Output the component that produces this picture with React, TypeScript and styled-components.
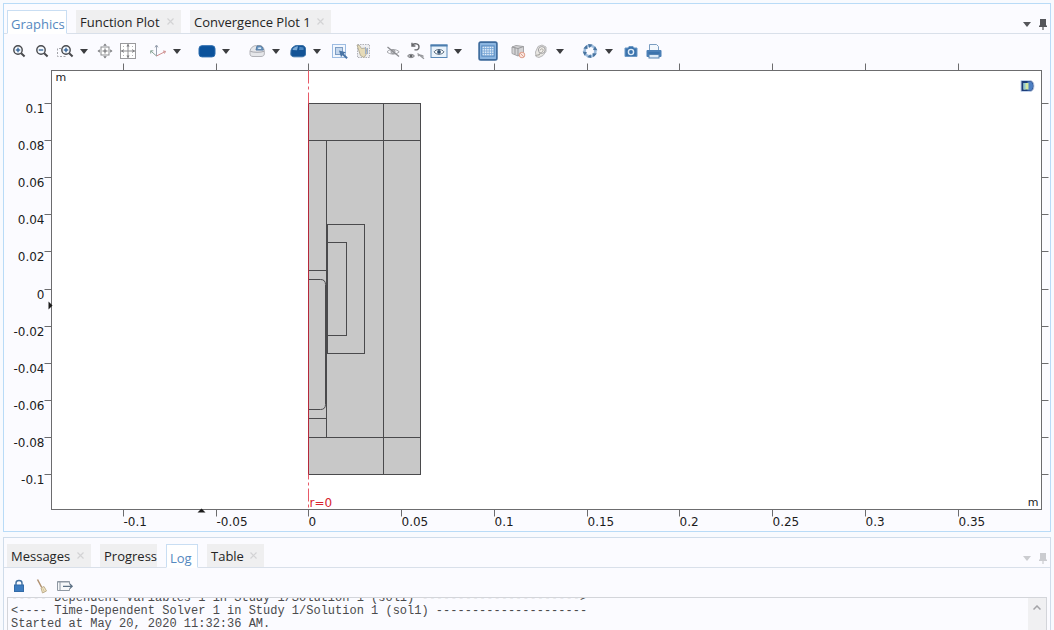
import React, { useLayoutEffect, useRef, useState } from "react";
import styled, { createGlobalStyle } from "styled-components";

const GlobalStyle = createGlobalStyle`
  * { box-sizing: border-box; }
  body { margin: 0; background: #f8fafe; font-family: "Open Sans", "Noto Sans", sans-serif; }
  button { font: inherit; color: inherit; border: 0; padding: 0; background: none; }
`;

const Page = styled.div`
  display: flex;
  flex-direction: column;
  gap: 5px;
  height: 100vh;
  padding: 3px 3px 0;
  overflow: hidden;
`;

const Panel = styled.section<{ $grow?: boolean }>`
  display: flex;
  flex-direction: column;
  flex: ${(p) => (p.$grow ? "1 1 0" : "0 0 93px")};
  min-height: 0;
  border: 1px solid ${(p) => (p.$grow ? "#b9dbf7" : "#cfdcea")};
  border-bottom-width: ${(p) => (p.$grow ? "1px" : "0")};
  background: #fbfbff;
`;

const TabRow = styled.div`
  display: flex;
  align-items: flex-end;
  height: 30px;
  flex: none;
  padding: 0 3px;
  border-bottom: 1px solid #d9e0ea;
`;

const TabList = styled.div`
  display: flex;
  flex: 1;
  gap: 9px;
`;

const Tab = styled.div<{ $width: number; $active?: boolean }>`
  display: flex;
  align-items: center;
  justify-content: space-between;
  width: ${(p) => p.$width}px;
  height: 24px;
  margin-bottom: -1px;
  padding: ${(p) => (p.$active ? "4px 3px 0" : "0 7px 0 4px")};
  border: ${(p) => (p.$active ? "1px solid #c9def3" : "0")};
  border-bottom: 1px solid ${(p) => (p.$active ? "#ffffff" : "#d9e0ea")};
  background: ${(p) => (p.$active ? "#ffffff" : "#efeff0")};
  color: ${(p) => (p.$active ? "#5588c0" : "#242424")};
  font-size: 13px;
  line-height: 18px;
  white-space: nowrap;
`;

const TabLabel = styled.button``;

const CloseButton = styled.button`
  display: flex;
  width: 7px;
  height: 7px;
  color: #d3d3d5;
`;

const PanelControls = styled.div<{ $dim?: boolean }>`
  display: flex;
  align-items: center;
  gap: 8px;
  padding-bottom: 3px;
  color: ${(p) => (p.$dim ? "#cbccd0" : "#55565a")};
`;

const ControlButton = styled.button`
  display: flex;
`;

const Toolbar = styled.div<{ $height: number }>`
  display: flex;
  align-items: flex-end;
  flex: none;
  height: ${(p) => p.$height}px;
  padding: 0 4px;
`;

const Group = styled.div<{ $before?: number }>`
  display: flex;
  gap: 1px;
  margin-left: ${(p) => p.$before ?? 0}px;
`;

const ToolButton = styled.button<{ $kind?: "caret" }>`
  display: flex;
  align-items: center;
  justify-content: center;
  width: ${(p) => (p.$kind === "caret" ? 14 : 22)}px;
  height: 22px;
  color: #3c3d40;
`;

const PlotArea = styled.div`
  flex: 1;
  min-height: 0;
  overflow: hidden;
`;

const PlotSvg = styled.svg`
  display: block;
  font-family: "DejaVu Sans", sans-serif;
  font-size: 12px;
  fill: #1c1c1c;
`;

const LogBox = styled.div`
  display: flex;
  flex: 1;
  min-height: 0;
  margin: 0 3px;
  border: 1px solid #d3d5da;
  border-bottom: 0;
  overflow: hidden;
`;

const LogText = styled.pre`
  flex: 1;
  margin: -6px 0 0;
  padding-left: 3px;
  color: #4a4a4c;
  font-family: "Liberation Mono", monospace;
  font-size: 12px;
  line-height: 13px;
`;

const ScrollTrack = styled.div`
  display: flex;
  justify-content: center;
  align-items: flex-start;
  width: 18px;
  padding-top: 7px;
  background: #f0f0f2;
  color: #a4a4a8;
`;

const Caret = () => (
  <svg width="8" height="5" viewBox="0 0 8 5" fill="currentColor">
    <path d="M0 0H8L4 5Z" />
  </svg>
);

const Cross = () => (
  <svg width="7" height="7" viewBox="0 0 7 7" stroke="currentColor" strokeWidth="1.2">
    <path d="M0.5 0.5L6.5 6.5M6.5 0.5L0.5 6.5" />
  </svg>
);

const Pin = () => (
  <svg width="8" height="11" viewBox="0 0 8 11" fill="currentColor">
    <path d="M1 0H7V6.5H8V8H4.6V11H3.4V8H0V6.5H1Z" />
  </svg>
);

const Chevron = () => (
  <svg width="8" height="5" viewBox="0 0 8 5" fill="none" stroke="currentColor" strokeWidth="1.5">
    <path d="M0.5 4.5L4 1L7.5 4.5" />
  </svg>
);

const Glyph = ({ children, size = 18 }: { children: React.ReactNode; size?: number }) => (
  <svg width={size} height={size} viewBox="0 0 18 18" fill="none" stroke="#48494d" strokeWidth="1">
    {children}
  </svg>
);

const Lens = ({ plus, minus }: { plus?: boolean; minus?: boolean }) => (
  <>
    <circle cx="8" cy="8" r="4.2" strokeWidth="1.4" fill="#f4f8fd" />
    <path d="M11.2 11.2L14.6 14.4" strokeWidth="2" />
    {(plus || minus) && <path d="M5.8 8H10.2" stroke="#2f5f95" strokeWidth="1.3" />}
    {plus && <path d="M8 5.8V10.2" stroke="#2f5f95" strokeWidth="1.3" />}
  </>
);

const icons = {
  zoomIn: <Glyph><Lens plus /></Glyph>,
  zoomOut: <Glyph><Lens minus /></Glyph>,
  zoomBox: (
    <Glyph>
      <path d="M5 6.5H1.5V14.5H10.5" stroke="#a2a3a8" strokeDasharray="2 1.5" />
      <g transform="translate(2 0)"><Lens plus /></g>
    </Glyph>
  ),
  extents: (
    <Glyph>
      <rect x="5" y="5" width="8" height="8" stroke="#8a8b8e" fill="#fff" />
      <path d="M9 6.5V11.5M6.5 9H11.5" stroke="#66676a" />
      <path d="M9 1.5L10.8 3.8H7.2ZM9 16.5L7.2 14.2H10.8ZM1.5 9L3.8 7.2V10.8ZM16.5 9L14.2 10.8V7.2Z" fill="#77787b" stroke="none" />
    </Glyph>
  ),
  grid: (
    <Glyph>
      <rect x="1.5" y="1.5" width="15" height="15" stroke="#9a9a9d" fill="#fff" />
      <path d="M9 2V16M2 9H16" stroke="#8d8d90" />
      <path d="M9 2L10.6 4.4H7.4ZM9 16L7.4 13.6H10.6ZM2 9L4.4 7.4V10.6ZM16 9L13.6 10.6V7.4Z" fill="#7d7d80" stroke="none" />
      <path d="M4.5 4V14M13.5 4V14" stroke="#b4b4b6" strokeDasharray="1 2" />
    </Glyph>
  ),
  axes: (
    <Glyph>
      <path d="M7.5 14V3.5M6 5.4L7.5 3L9 5.4" stroke="#9aa2b0" />
      <path d="M7.5 14L16.3 9.5M14 9L16.5 9.4L15.4 11.6" stroke="#cf8f8f" />
      <path d="M7.5 14L1.8 9M1.7 11.5V8.8H4.4" stroke="#89a597" />
    </Glyph>
  ),
  surface: (
    <Glyph>
      <rect x="1" y="3.7" width="16" height="11.2" rx="3" fill="#0b529c" stroke="#2c6cae" />
    </Glyph>
  ),
  transparency: (
    <Glyph>
      <path d="M2 9C2.5 6 5 3.5 8.5 3.5H12C14 3.5 16 5.5 16.3 9V12C16.3 13.5 15 14.5 13 14.5H5C3 14.5 2 13.5 2 12Z" fill="#e6e7ea" stroke="#b2b3b8" />
      <path d="M2.3 9.3C5 10.6 13 10.6 16 9.3" stroke="#a5a6ac" />
      <path d="M9 4H12C13.6 4 15 5.5 15.3 8H8Z" fill="#6f9cc8" stroke="#54799f" />
      <path d="M10.5 5.6H13V7H10Z" fill="#dcebf8" stroke="none" />
    </Glyph>
  ),
  sphere: (
    <Glyph>
      <path d="M2 8.5C2.5 5.5 5.5 3.5 8 3.5H13C15 3.5 16.5 5 16.5 7V12C16.5 13.8 15 14.8 13 14.8H5C3 14.8 1.8 13.6 1.8 12Z" fill="#135396" stroke="#3b72a8" />
      <path d="M3.4 8C4.4 5.6 6.5 4.3 9 4.3L8 8.2Z" fill="#7cabd6" stroke="none" />
      <path d="M10.5 4.8L14.6 5.4L14.5 8L10 8Z" fill="#4b87c0" stroke="none" />
    </Glyph>
  ),
  selectBox: (
    <Glyph>
      <rect x="1.5" y="2.5" width="13" height="13" stroke="#9dbce2" fill="#f2f7fe" />
      <rect x="4.5" y="5.5" width="7" height="7" stroke="#7d9dc5" fill="#c4d7ed" />
      <path d="M8 8.5L15 10.2L12.8 11.8L16.8 15.6L15.4 17L11.5 13.2L10 15.2Z" fill="#4a75a6" stroke="none" />
    </Glyph>
  ),
  selectPaint: (
    <Glyph>
      <rect x="3.5" y="2.5" width="12" height="13" stroke="#b1b2b8" strokeDasharray="1.5 1" fill="#eeeef0" />
      <path d="M3 3L5.5 3.5L7.5 6.5L12 6L13 11L10 15.5L6.5 13.5Z" fill="#e6dbb8" stroke="#b5af9b" />
      <path d="M11.5 5V12M13.5 6V12" stroke="#9db0cc" />
    </Glyph>
  ),
  hide: (
    <Glyph>
      <path d="M3 9.8C5.5 6.8 12.5 6.8 15.2 9.8C12.5 12.8 5.5 12.8 3 9.8Z" stroke="#a2a3a8" />
      <circle cx="9" cy="9.8" r="2" fill="#c2c3c7" stroke="#97989d" />
      <path d="M3.5 5L15 14.5" stroke="#8a8b90" strokeWidth="1.3" />
    </Glyph>
  ),
  resetHidden: (
    <Glyph>
      <path d="M5.5 3C7.5 1 12 1.5 12 5C12 7.6 9.5 8.4 7.5 7.6M5 0.8V4H8.4" stroke="#66676b" strokeWidth="1.4" />
      <path d="M0.5 14C2 11.8 6 11.8 7.5 14C6 16.2 2 16.2 0.5 14Z" fill="#b1b2b6" stroke="#87888c" />
      <circle cx="4" cy="14" r="1" fill="#4a4b4f" stroke="none" />
      <path d="M11 14C12 12.6 15 13 16.5 14.5M10.5 11.5L17 16.8" stroke="#97989c" strokeWidth="1.3" />
    </Glyph>
  ),
  viewHidden: (
    <Glyph>
      <rect x="1" y="3" width="16" height="12.5" stroke="#5a89b8" fill="#eaf3fb" />
      <path d="M0.5 3.5H17.5" stroke="#4b7dae" strokeWidth="2" />
      <path d="M4 9.9C6.5 6.7 11.5 6.7 14 9.9C11.5 13.1 6.5 13.1 4 9.9Z" fill="#fff" stroke="#52677b" />
      <circle cx="9" cy="9.9" r="1.9" fill="#2f4e6d" stroke="none" />
    </Glyph>
  ),
  gridOn: (
    <Glyph size={20}>
      <rect x="1" y="1" width="16" height="16" rx="1.5" fill="#8bb5e0" stroke="#3d6a9c" strokeWidth="1.5" />
      <rect x="3.5" y="4.5" width="11" height="9" fill="#e6f1fc" stroke="#5287bf" />
      <path d="M5.7 4.5V13.5M7.9 4.5V13.5M10.1 4.5V13.5M12.3 4.5V13.5M3.5 6.8H14.5M3.5 9H14.5M3.5 11.2H14.5" stroke="#7aa7d6" strokeWidth="0.8" />
    </Glyph>
  ),
  clipBox: (
    <Glyph>
      <path d="M3 5L7 3.5L14.5 4.5V11L9 14L3 11.5Z" fill="#d4d4d6" stroke="#a5a5a8" />
      <path d="M3 5L9 6.5L14.5 4.5M9 6.5V14M6 5.5V12.5" stroke="#98989b" />
      <circle cx="13" cy="13" r="2.8" fill="#f9e6e0" stroke="#dfa08d" />
      <path d="M11.2 11.2L14.8 14.8" stroke="#dfa08d" />
    </Glyph>
  ),
  clipPlane: (
    <Glyph>
      <path d="M4 14.5L3.5 10L6 4.5L10 3L14 5V9.5L11 13.5L7 15.5Z" fill="#e9e7e3" stroke="#b8b8ba" />
      <ellipse cx="9.8" cy="8" rx="3.4" ry="3.4" fill="#f4f1ec" stroke="#9f9fa2" />
      <path d="M8 8.5C8.5 6.2 11.2 6.5 11.2 8.2C11.2 10 8.5 10.5 6.5 13M3.5 13.5L8 12.5" stroke="#a6a49f" />
    </Glyph>
  ),
  refresh: (
    <Glyph>
      <circle cx="9" cy="9" r="5.4" stroke="#9dbcdd" strokeWidth="2.8" />
      <path d="M7 2L11.5 2.6L8.5 6ZM14 4.2L16.4 8.2L12 8ZM15.8 11.5L12.5 15.2L11.4 11.3ZM10.5 16L6.3 15.2L9.4 12.2ZM3.6 13.8L1.7 9.6L6 10.3ZM2.4 6.4L5.6 3L6.7 7Z" fill="#49749f" stroke="none" />
    </Glyph>
  ),
  camera: (
    <Glyph>
      <path d="M3 6H6L7 4.5H11L12 6H15V14.5H3Z" fill="#3b73ad" stroke="#6b98c5" />
      <circle cx="9" cy="10" r="2.6" fill="#3b73ad" stroke="#dcebf8" strokeWidth="1.4" />
    </Glyph>
  ),
  printer: (
    <Glyph>
      <path d="M4.5 8.5V2.5H11.5L13.5 4.5V8.5" fill="#f3f8fd" stroke="#7a9dc1" />
      <path d="M2.5 9H15.5V14H2.5Z" fill="#3b73ad" stroke="#4a7fb6" strokeWidth="2" strokeLinejoin="round" />
      <rect x="4" y="12.5" width="10" height="3.5" fill="#dceaf7" stroke="#5583b2" />
    </Glyph>
  ),
  lock: (
    <Glyph>
      <path d="M6 8V6C6 2.6 12 2.6 12 6V8" stroke="#42719f" strokeWidth="1.4" />
      <rect x="4.5" y="8" width="9" height="6.5" fill="#3d7cc0" stroke="#336ba7" />
    </Glyph>
  ),
  broom: (
    <Glyph>
      <path d="M4.5 2.5L9 11" stroke="#b09070" strokeWidth="1.5" />
      <path d="M8 11L11 9.5L13.5 14L9.5 16Z" fill="#f3e6c4" stroke="#bfb091" />
      <path d="M9.8 11.5L11.5 15" stroke="#cdbf9d" />
    </Glyph>
  ),
  exportLog: (
    <Glyph>
      <path d="M13.5 7V4.5H1.5V13.5H13.5V11.5" fill="#f6f8fa" stroke="#8e98a3" />
      <path d="M1.5 5H13.5M4 5V13" stroke="#8e98a3" />
      <path d="M7 9.3H16M13.8 7L16.2 9.3L13.8 11.6" stroke="#5c7084" strokeWidth="1.2" />
    </Glyph>
  ),
};

type IconName = keyof typeof icons;

const toolGroups: { before?: number; items: [IconName, string][]; menu?: boolean }[] = [
  { items: [["zoomIn", "Zoom in"], ["zoomOut", "Zoom out"], ["zoomBox", "Zoom box"]], menu: true },
  { before: 3, items: [["extents", "Zoom extents"], ["grid", "Zoom to selection"]] },
  { before: 8, items: [["axes", "Go to view"]], menu: true },
  { before: 12, items: [["surface", "Domain color"]], menu: true },
  { before: 13, items: [["transparency", "Transparency"]], menu: true },
  { before: 4, items: [["sphere", "Scene light"]], menu: true },
  { before: 5, items: [["selectBox", "Select box"], ["selectPaint", "Deselect box"]] },
  { before: 8, items: [["hide", "Hide"], ["resetHidden", "Reset hiding"], ["viewHidden", "View hidden"]], menu: true },
  { before: 12, items: [["gridOn", "Show grid"]] },
  { before: 8, items: [["clipBox", "Disable clipping"], ["clipPlane", "Clipping"]], menu: true },
  { before: 12, items: [["refresh", "Refresh"]], menu: true },
  { before: 4, items: [["camera", "Image snapshot"], ["printer", "Print"]] },
];

const logTools: [IconName, string][] = [
  ["lock", "Scroll lock"],
  ["broom", "Clear log"],
  ["exportLog", "Export log"],
];

const logLines = [
  "----- Dependent Variables 1 in Study 1/Solution 1 (sol1) ---------------------->",
  "<---- Time-Dependent Solver 1 in Study 1/Solution 1 (sol1) ---------------------",
  "Started at May 20, 2020 11:32:36 AM.",
].join("\n");

// Plot scale in pixels per metre, and where r = 0 and z = 0 fall.
const SCALE = 1855;
const ORIGIN_X = 304.9;
const ORIGIN_Y = 227;
const LEFT = 47.5;
const TOP = 8.5;
const TICK = 7;

const px = (r: number) => Math.floor(ORIGIN_X + r * SCALE) + 0.5;
const py = (z: number) => Math.floor(ORIGIN_Y - z * SCALE) + 0.5;

const xTicks = [-0.1, -0.05, 0, 0.05, 0.1, 0.15, 0.2, 0.25, 0.3, 0.35];
const yTicks = [0.1, 0.08, 0.06, 0.04, 0.02, 0, -0.02, -0.04, -0.06, -0.08, -0.1];

const Plot = () => {
  const area = useRef<HTMLDivElement>(null);
  const [size, setSize] = useState({ width: 0, height: 0 });

  useLayoutEffect(() => {
    const node = area.current;
    if (!node) return;
    const measure = () => setSize({ width: node.clientWidth, height: node.clientHeight });
    measure();
    const observer = new ResizeObserver(measure);
    observer.observe(node);
    return () => observer.disconnect();
  }, []);

  const right = size.width - 8.5;
  const bottom = size.height - 21.5;

  return (
    <PlotArea ref={area}>
      {size.width > 0 && (
        <PlotSvg width={size.width} height={size.height} role="img" aria-label="Axisymmetric geometry">
          <rect x={LEFT} y={TOP} width={right - LEFT} height={bottom - TOP} fill="#fff" stroke="#6c6c6e" />
          <g stroke="#6c6c6e">
            {xTicks.map((t) => (
              <path key={t} d={`M${px(t)} ${TOP}V${TOP - TICK}M${px(t)} ${bottom}V${bottom + TICK}`} />
            ))}
            {yTicks.map((t) => (
              <path key={t} d={`M${LEFT} ${py(t)}H${LEFT - TICK}M${right} ${py(t)}H${right + TICK}`} />
            ))}
          </g>
          {xTicks.map((t) => (
            <text key={t} x={px(t)} y={bottom + 16}>{t}</text>
          ))}
          {yTicks.map((t) => (
            <text key={t} x={LEFT - 7} y={py(t) + 9} textAnchor="end">{t}</text>
          ))}
          <text x={LEFT + 4} y={TOP + 10} fontSize="11">m</text>
          <text x={right - 3} y={bottom - 4} fontSize="11" textAnchor="end">m</text>

          <g fill="none" stroke="#4a4a4c">
            <rect x={px(0)} y={py(0.1)} width={px(0.06) - px(0)} height={py(-0.1) - py(0.1)} fill="#c8c8c8" />
            <path d={`M${px(0.04)} ${py(0.1)}V${py(-0.1)}M${px(0)} ${py(0.08)}H${px(0.06)}M${px(0)} ${py(-0.08)}H${px(0.06)}`} />
            <path d={`M${px(0.0095)} ${py(0.08)}V${py(-0.08)}M${px(0)} ${py(0.01)}H${px(0.0095)}M${px(0)} ${py(-0.07)}H${px(0.0095)}`} />
            <rect x={px(0.01)} y={py(0.035)} width={px(0.03) - px(0.01)} height={py(-0.035) - py(0.035)} />
            <rect x={px(0.01)} y={py(0.025)} width={px(0.02) - px(0.01)} height={py(-0.025) - py(0.025)} />
            <path d={`M${px(0)} ${py(0.005)}H${px(0.009) - 5}q5 0 5 5V${py(-0.065) - 5}q0 5 -5 5H${px(0)}`} />
          </g>
          <path d={`M${px(0)} ${TOP}V${bottom}`} stroke="#e85a68" strokeDasharray="13 3 3 3" />
          <path d={`M${px(0)} ${py(0.1)}V${py(-0.1)}`} stroke="#b5283a" />
          <text x={px(0) + 1} y={bottom - 3} fill="#d8232f">r=0</text>

          <path d={`M${LEFT - 3} ${py(-0.009) - 4}V${py(-0.009) + 4}L${LEFT + 1} ${py(-0.009)}Z`} />
          <path d={`M${px(-0.058) - 4} ${bottom + 3}h8l-4 -4Z`} />

          <g transform={`translate(${right - 22} ${TOP + 9})`}>
            <path d="M1.5 1H9.5C13 1 14.5 3 14.5 6.5S13 12 9.5 12H1.5Z" fill="#1d3d78" stroke="#c3d2ea" />
            <path d="M8 2H10C12.5 2 13.5 4 13.5 6.5S12.5 11 10 11H8Z" fill="#4d7fc3" />
            <path d="M4 3.5H9V10H4Z" fill="#d5e8a0" />
            <path d="M4 3.5H6V10H4Z" fill="#8fc7d8" />
          </g>
        </PlotSvg>
      )}
    </PlotArea>
  );
};

interface TabInfo {
  label: string;
  width: number;
  active?: boolean;
  closable?: boolean;
}

const Tabs = ({ tabs, dim }: { tabs: TabInfo[]; dim?: boolean }) => (
  <TabRow>
    <TabList role="tablist">
      {tabs.map((tab) => (
        <Tab key={tab.label} $width={tab.width} $active={tab.active}>
          <TabLabel role="tab" aria-selected={!!tab.active}>{tab.label}</TabLabel>
          {tab.closable && <CloseButton aria-label={`Close ${tab.label}`}><Cross /></CloseButton>}
        </Tab>
      ))}
    </TabList>
    <PanelControls $dim={dim}>
      <ControlButton aria-label="Panel menu"><Caret /></ControlButton>
      <ControlButton aria-label="Pin panel"><Pin /></ControlButton>
    </PanelControls>
  </TabRow>
);

export default function App() {
  return (
    <>
      <GlobalStyle />
      <Page>
        <Panel $grow>
          <Tabs
            tabs={[
              { label: "Graphics", width: 60, active: true },
              { label: "Function Plot", width: 105, closable: true },
              { label: "Convergence Plot 1", width: 141, closable: true },
            ]}
          />
          <Toolbar $height={28}>
            {toolGroups.map((group) => (
              <Group key={group.items[0][0]} $before={group.before}>
                {group.items.map(([icon, label]) => (
                  <ToolButton key={icon} aria-label={label}>{icons[icon]}</ToolButton>
                ))}
                {group.menu && (
                  <ToolButton $kind="caret" aria-label="More options"><Caret /></ToolButton>
                )}
              </Group>
            ))}
          </Toolbar>
          <Plot />
        </Panel>
        <Panel>
          <Tabs
            dim
            tabs={[
              { label: "Messages", width: 84, closable: true },
              { label: "Progress", width: 57 },
              { label: "Log", width: 32, active: true },
              { label: "Table", width: 57, closable: true },
            ]}
          />
          <Toolbar $height={29}>
            <Group>
              {logTools.map(([icon, label]) => (
                <ToolButton key={icon} aria-label={label}>{icons[icon]}</ToolButton>
              ))}
            </Group>
          </Toolbar>
          <LogBox>
            <LogText>{logLines}</LogText>
            <ScrollTrack>
              <ControlButton aria-label="Scroll up"><Chevron /></ControlButton>
            </ScrollTrack>
          </LogBox>
        </Panel>
      </Page>
    </>
  );
}
